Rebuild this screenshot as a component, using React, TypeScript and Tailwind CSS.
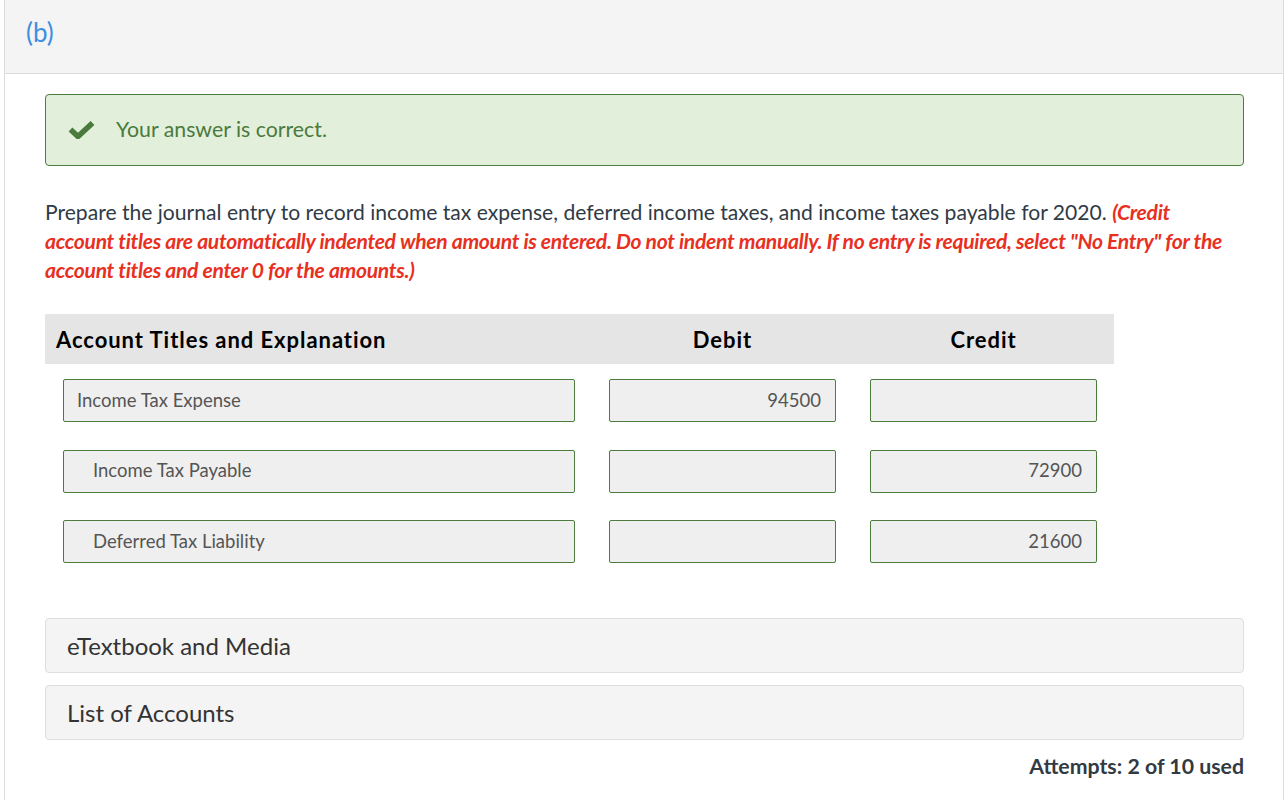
import React from "react";

const rows = [
  { title: "Income Tax Expense", indent: false, debit: "94500", credit: "" },
  { title: "Income Tax Payable", indent: true, debit: "", credit: "72900" },
  { title: "Deferred Tax Liability", indent: true, debit: "", credit: "21600" },
];

function Check() {
  return (
    <svg width="27" height="18" viewBox="0 0 27 18" className="shrink-0">
      <path d="M2.5 8.5 L10 15.5 L24.5 2" fill="none" stroke="#4a7a3c" strokeWidth="5.5" strokeLinejoin="miter" strokeLinecap="butt" />
    </svg>
  );
}

export default function App() {
  return (
    <div className="w-[1286px] h-[800px] bg-white overflow-hidden" style={{ fontFamily: "Lato, 'Open Sans', sans-serif" }}>
      <div className="ml-[4px] w-[1280px] h-[800px] border-x border-[#dcdcdc]">
        <div className="h-[74px] bg-[#f4f4f4] border-b border-[#dcdcdc] pl-[21px] pt-[13px]">
          <span className="text-[26px] text-[#3d8fe0]">(b)</span>
        </div>
        <div className="pl-[40px] pr-[39px] pt-[20px]">
          <div className="h-[72px] rounded-[4px] border border-[#4d7c3f] bg-[#e2efdb] flex items-center pl-[22px]">
            <Check />
            <span className="ml-[21px] text-[21.3px] text-[#4a7a3c]">Your answer is correct.</span>
          </div>
          <p className="mt-[31px] text-[21.1px] leading-[29px] text-[#2f3b46] whitespace-nowrap">
            Prepare the journal entry to record income tax expense, deferred income taxes, and income taxes payable for 2020.{" "}
            <span className="italic font-bold text-[#e8301f] tracking-[-0.3px]">
              (Credit
              <br />
              account titles are automatically indented when amount is entered. Do not indent manually. If no entry is required, select "No Entry" for the
              <br />
              account titles and enter 0 for the amounts.)
            </span>
          </p>
          <div className="mt-[30px] w-[1069px]">
            <div className="h-[50px] bg-[#e5e5e5] flex items-center text-[22px] font-bold text-black tracking-[0.95px]">
              <div className="w-[547px] pl-[11px]">Account Titles and Explanation</div>
              <div className="w-[261px] text-center">Debit</div>
              <div className="w-[261px] text-center">Credit</div>
            </div>
            <div className="pt-[15px] flex flex-col gap-[27.5px]">
              {rows.map((r) => (
                <div key={r.title} className="flex">
                  <div className="w-[547px] pl-[18px] pr-[17px]">
                    <div className={`h-[43px] rounded-[2px] border border-[#4d7c3f] bg-[#efefef] flex items-center text-[18.5px] text-[#555] ${r.indent ? "pl-[29px]" : "pl-[13px]"}`}>
                      {r.title}
                    </div>
                  </div>
                  <div className="w-[261px] px-[17px]">
                    <div className="h-[43px] rounded-[2px] border border-[#4d7c3f] bg-[#efefef] flex items-center justify-end pr-[14px] text-[18.5px] text-[#555]">
                      {r.debit}
                    </div>
                  </div>
                  <div className="w-[261px] px-[17px]">
                    <div className="h-[43px] rounded-[2px] border border-[#4d7c3f] bg-[#efefef] flex items-center justify-end pr-[14px] text-[18.5px] text-[#555]">
                      {r.credit}
                    </div>
                  </div>
                </div>
              ))}
            </div>
          </div>
          <div className="mt-[55px] flex flex-col gap-[12px]">
            <div className="h-[55px] rounded-[4px] border border-[#dedede] bg-[#f4f4f4] flex items-center pl-[21px] text-[24px] text-[#333]">
              eTextbook and Media
            </div>
            <div className="h-[55px] rounded-[4px] border border-[#dedede] bg-[#f4f4f4] flex items-center pl-[21px] text-[24px] text-[#333]">
              List of Accounts
            </div>
          </div>
          <div className="mt-[11px] text-right text-[21.3px] font-bold text-[#333a42]">Attempts: 2 of 10 used</div>
        </div>
      </div>
    </div>
  );
}
